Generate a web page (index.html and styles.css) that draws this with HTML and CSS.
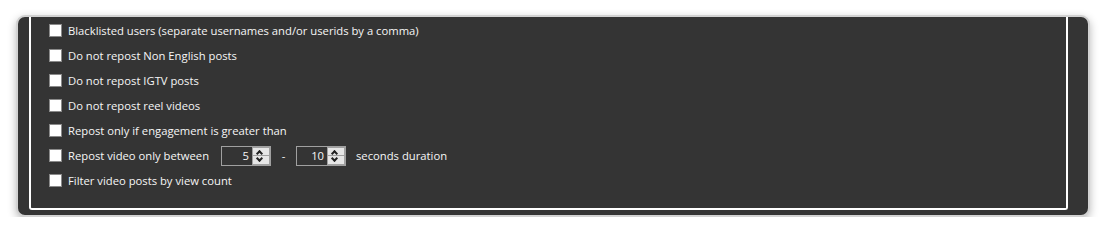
FILE: index.html
```html
<!DOCTYPE html>
<html lang="en">
<head>
    <meta charset="UTF-8">
    <title>Repost Filters</title>
    <link rel="stylesheet" href="styles.css">
</head>
<body>

    <div class="panel">
        <div class="group">
            <label class="row"><span class="check"></span>Blacklisted users (separate usernames and/or userids by a comma)</label>
            <label class="row"><span class="check"></span>Do not repost Non English posts</label>
            <label class="row"><span class="check"></span>Do not repost IGTV posts</label>
            <label class="row"><span class="check"></span>Do not repost reel videos</label>
            <label class="row"><span class="check"></span>Repost only if engagement is greater than</label>
            <div class="row">
                <span class="check"></span>
                <span class="between-label">Repost video only between</span>
                <div class="spinner">
                    <span class="value">5</span>
                    <div class="spin-buttons">
                        <span class="spin up"></span>
                        <span class="spin down"></span>
                    </div>
                </div>
                <span class="dash">-</span>
                <div class="spinner">
                    <span class="value">10</span>
                    <div class="spin-buttons">
                        <span class="spin up"></span>
                        <span class="spin down"></span>
                    </div>
                </div>
                <span class="unit">seconds duration</span>
            </div>
            <label class="row"><span class="check"></span>Filter video posts by view count</label>
        </div>
    </div>

</body>
</html>
```

FILE: styles.css
```css
body {
    margin: 0;
    padding: 0;
    background-color: #ffffff;
    font-family: "Open Sans", "Noto Sans", sans-serif;
    font-size: 11.25px;
    color: #f6f6f6;
}

.panel {
    margin: 15px 0 0 16px;
    width: 1074px;
    height: 202px;
    background-color: #343434;
    border: 2px solid #d2d2d2;
    border-radius: 9px;
    box-shadow: 0 3px 8px rgba(0, 0, 0, 0.28);
    padding: 0 20px 0 11px;
    box-sizing: border-box;
    display: flex;
}

.group {
    flex: 1;
    border: 2px solid #ffffff;
    border-top: none;
    border-radius: 0 0 3px 3px;
    margin-bottom: 5px;
    padding: 1px 0 0 18px;
}

.row {
    display: flex;
    align-items: center;
    height: 25px;
}

.check {
    width: 11px;
    height: 11px;
    background-color: #ffffff;
    border: 1px solid #8a8a8a;
    margin-right: 6px;
    flex-shrink: 0;
}

.between-label {
    width: 153px;
}

.spinner {
    display: flex;
    width: 48px;
    height: 18px;
    border: 1px solid #a0a0a0;
}

.spinner .value {
    flex: 1;
    text-align: right;
    padding-right: 3px;
    line-height: 18px;
}

.spin-buttons {
    width: 16px;
    display: flex;
    flex-direction: column;
    gap: 1px;
    padding: 1px;
    background-color: #a0a0a0;
}

.spin {
    flex: 1;
    background-color: #e6e6e6;
    position: relative;
}

.spin::after {
    content: "";
    position: absolute;
    left: 4px;
    width: 5px;
    height: 5px;
    border-left: 2px solid #222222;
    border-top: 2px solid #222222;
    box-sizing: border-box;
}

.spin.up::after {
    top: 3px;
    transform: rotate(45deg);
}

.spin.down::after {
    top: 0px;
    transform: rotate(225deg);
}

.dash {
    width: 25px;
    text-align: center;
}

.unit {
    margin-left: 10px;
}
```
